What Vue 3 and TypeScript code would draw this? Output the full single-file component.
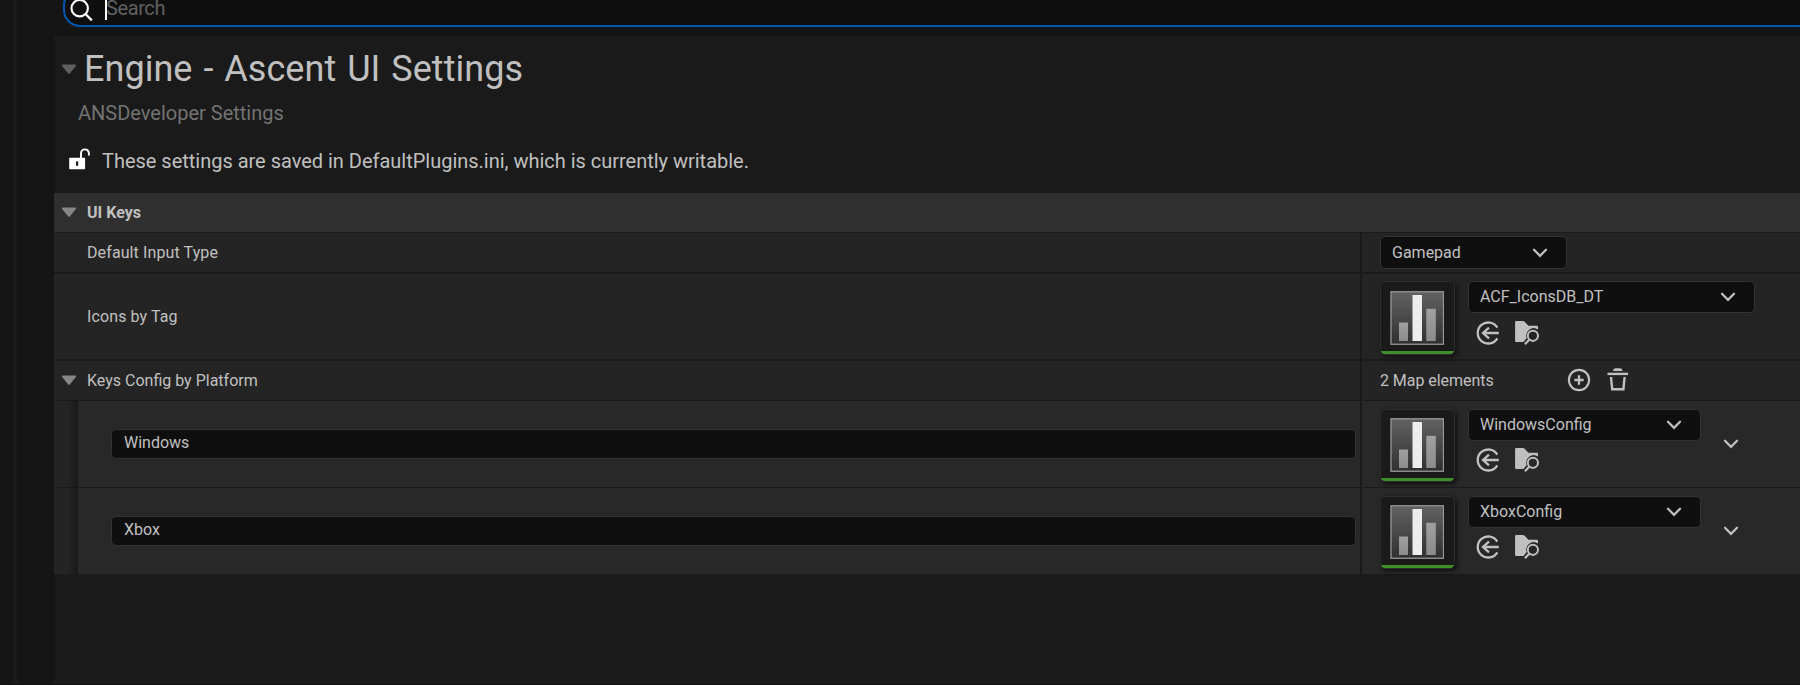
<script setup lang="ts">
interface MapEntry {
  key: string
  asset: string
}

const iconsAsset = 'ACF_IconsDB_DT'
const entries: MapEntry[] = [
  { key: 'Windows', asset: 'WindowsConfig' },
  { key: 'Xbox', asset: 'XboxConfig' },
]
</script>

<template>
  <div class="window">
    <svg class="defs" width="0" height="0" aria-hidden="true">
      <defs>
        <linearGradient id="thumb-bg" x1="0" y1="0" x2="0" y2="1">
          <stop offset="0" stop-color="#626262" />
          <stop offset="1" stop-color="#303030" />
        </linearGradient>
        <linearGradient id="thumb-bar" x1="0" y1="0" x2="0" y2="1">
          <stop offset="0" stop-color="#a0a0a0" />
          <stop offset="1" stop-color="#8c8c8c" />
        </linearGradient>
        <symbol id="caret" viewBox="0 0 16 11">
          <path d="M1.6 .5h12.8q1.3 .2 .5 1.4L9 9.2q-1 1-2 0L1.1 1.9Q.3 .7 1.6 .5z" fill="currentColor" />
        </symbol>
        <symbol id="chevron" viewBox="0 0 16 10">
          <path d="M2 1.800L8 7.800L14 1.800" fill="none" stroke="currentColor" stroke-width="2.300" stroke-linecap="round" stroke-linejoin="miter" />
        </symbol>
        <symbol id="thumb" viewBox="0 0 54 54">
          <rect x="1" y=".75" width="52.5" height="52.5" fill="url(#thumb-bg)" stroke="#979797" stroke-width="1.3" />
          <rect x="9" y="31.500" width="9" height="18.500" fill="url(#thumb-bar)" />
          <rect x="22.500" y="4" width="9.500" height="46" fill="#ededed" />
          <rect x="36.300" y="17.800" width="9.500" height="32.200" fill="url(#thumb-bar)" />
        </symbol>
        <symbol id="use-arrow" viewBox="0 0 24 24">
          <path d="M21.300 6.700A10.500 10.500 0 1 0 21.300 17.300M22.800 12H7M13 6.600L7 12L13 17.400" fill="none" stroke="currentColor" stroke-width="2.300" />
        </symbol>
        <symbol id="browse" viewBox="0 0 25 25">
          <path d="M1.200 0h6.800q.8 0 1.400 .6L13.400 4.800H22q1 0 1 1V8.600A7.400 7.400 0 0 0 11.700 17.100L8.400 21H1.200Q.1 21 .1 19.900V1.100Q.1 0 1.200 0z" fill="currentColor" />
          <circle cx="17.900" cy="14.800" r="5.100" fill="none" stroke="currentColor" stroke-width="2" />
          <path d="M14.400 18.400L9.900 23.300" stroke="currentColor" stroke-width="2.200" />
        </symbol>
      </defs>
    </svg>

    <aside class="gutter"><span class="gutter-line"></span></aside>

    <main class="content">
      <div class="search">
        <svg class="search-icon" viewBox="0 0 24 24">
          <circle cx="9.700" cy="9.200" r="8.200" fill="none" stroke="#fff" stroke-width="2.100" />
          <path d="M15.500 15L21.800 21.400" stroke="#fff" stroke-width="2.300" />
        </svg>
        <span class="cursor"></span>
        <span class="placeholder">Search</span>
      </div>

      <section class="panel">
        <header class="heading">
          <div class="title-row">
            <svg class="caret dim"><use href="#caret" /></svg>
            <h1>Engine - Ascent UI Settings</h1>
          </div>
          <p class="subtitle">ANSDeveloper Settings</p>
          <div class="notice">
            <svg class="lock" viewBox="0 0 22 22">
              <path d="M1 9.800h14.300q.8 0 .8 .8v9.900q0 .8-.8 .8H1q-.8 0-.8-.8V10.600q0-.8 .8-.8z" fill="#fff" />
              <path d="M12 10.300V5.300a3.900 3.900 0 0 1 7.900 0V7.600" fill="none" stroke="#fff" stroke-width="1.900" />
              <rect x="7" y="13.300" width="2.200" height="4.600" rx=".8" fill="#1a1a1a" />
            </svg>
            <span>These settings are saved in DefaultPlugins.ini, which is currently writable.</span>
          </div>
        </header>

        <div class="group">
          <svg class="caret"><use href="#caret" /></svg>
          <h2>UI Keys</h2>
        </div>

        <div class="row short thick">
          <div class="name spaced">Default Input Type</div>
          <div class="value">
            <div class="combo small"><span>Gamepad</span><svg class="chevron"><use href="#chevron" /></svg></div>
          </div>
        </div>

        <div class="row tall thick">
          <div class="name spaced">Icons by Tag</div>
          <div class="value">
            <div class="thumb"><svg><use href="#thumb" /></svg></div>
            <div class="asset">
              <div class="combo wide"><span>{{ iconsAsset }}</span><svg class="chevron"><use href="#chevron" /></svg></div>
              <div class="tools">
                <svg class="use-arrow"><use href="#use-arrow" /></svg>
                <svg class="browse"><use href="#browse" /></svg>
              </div>
            </div>
          </div>
        </div>

        <div class="row short">
          <div class="name"><svg class="caret"><use href="#caret" /></svg>Keys Config by Platform</div>
          <div class="value">
            <span class="count">2 Map elements</span>
            <svg class="plus" viewBox="0 0 24 24">
              <circle cx="12" cy="12" r="10.100" fill="none" stroke="currentColor" stroke-width="2.100" />
              <path d="M12 7.300v9.400M7.300 12h9.400" stroke="currentColor" stroke-width="2.300" />
            </svg>
            <svg class="trash" viewBox="0 0 22 24">
              <path d="M6 2.900Q6.400 .3 8.400 .3h4.800q2 0 2.400 2.600z" fill="currentColor" />
              <path d="M.5 5.900h20.600" stroke="currentColor" stroke-width="2.400" />
              <path d="M4 9L5.200 21.300h11.200L17.600 9" fill="none" stroke="currentColor" stroke-width="2.400" />
            </svg>
          </div>
        </div>

        <div v-for="entry in entries" :key="entry.key" class="row tall child">
          <div class="name">
            <span class="indent"></span>
            <div class="field">{{ entry.key }}</div>
          </div>
          <div class="value">
            <div class="thumb"><svg><use href="#thumb" /></svg></div>
            <div class="asset">
              <div class="combo"><span>{{ entry.asset }}</span><svg class="chevron"><use href="#chevron" /></svg></div>
              <div class="tools">
                <svg class="use-arrow"><use href="#use-arrow" /></svg>
                <svg class="browse"><use href="#browse" /></svg>
              </div>
            </div>
            <svg class="chevron more"><use href="#chevron" /></svg>
          </div>
        </div>
      </section>
    </main>
  </div>
</template>

<style>
html, body { background: #151515; overflow: hidden; }
</style>

<style scoped>
* { box-sizing: border-box; margin: 0; }
svg { display: block; flex: none; }
.window {
  display: flex;
  width: 1800px;
  height: 685px;
  overflow: hidden;
  background: #151515;
  border-bottom: 1px solid #121011;
  color: #c0c0c0;
  font-family: Roboto, "Liberation Sans", sans-serif;
  font-size: 16px;
  line-height: 20px;
}
.defs { position: absolute; }
.gutter { width: 54px; flex: none; padding-left: 13px; }
.gutter-line { display: block; width: 5px; height: 100%; background: #1a1a1a; }
.content { flex: 1; min-width: 0; display: flex; flex-direction: column; }
.search {
  flex: none;
  display: flex;
  height: 39px;
  width: 1780px;
  margin: -12px 0 9px 9px;
  padding: 11px 0 0 5px;
  background: #0f0f0f;
  border: 2px solid #0057b0;
  border-radius: 17px;
}
.search-icon { width: 24px; height: 24px; margin-top: -2px; }
.cursor { width: 2px; height: 25px; margin: -6px 0 0 11px; background: #fff; }
.placeholder { height: 16px; margin: -1px 0 0 -1px; font-size: 20px; line-height: 16px; color: #606060; letter-spacing: -.4px; }
.panel { flex: 1; background: #1a1a1a; }
.heading { height: 157px; padding-top: 9px; }
.title-row { display: flex; align-items: center; height: 48px; }
.caret { width: 16px; height: 11px; margin-left: 7px; color: #868686; }
.caret.dim { color: #606060; }
h1 { margin-left: 7px; font-size: 36px; line-height: 48px; font-weight: 400; letter-spacing: .03px; word-spacing: 2px; white-space: nowrap; }
.subtitle { margin-top: 8px; padding-left: 24px; font-size: 20px; line-height: 24px; color: #737373; }
.notice { display: flex; align-items: center; height: 24px; margin-top: 24px; padding-left: 15px; font-size: 20px; letter-spacing: -.015px; }
.notice span { margin-left: 11px; white-space: nowrap; }
.lock { width: 22px; height: 22px; margin-top: -4px; }
.group { display: flex; align-items: center; height: 40px; background: #2f2f2f; border-bottom: 1px solid #1a1a1a; }
h2 { margin-left: 10px; font-size: 16px; font-weight: 700; line-height: 20px; }
.row { display: flex; background: #242424; border-bottom: 1px solid #1a1a1a; }
.row.thick { border-bottom-width: 2px; }
.short { height: 40px; }
.short.thick { height: 41px; }
.tall { height: 87px; }
.child { background: #282828; }
.child:last-child { border-bottom: 0; height: 86px; }
.name { display: flex; align-items: center; width: 1308px; flex: none; padding-left: 33px; border-right: 2px solid #1a1a1a; }
.name.spaced { letter-spacing: .11px; }
.name .caret { margin: 0 10px 0 -26px; }
.value { display: flex; align-items: center; flex: 1; padding-left: 18px; }
.tall .value { align-items: flex-start; padding-top: 7px; }
.child .value { padding-top: 8px; }
.child .name { padding: 0 4px 0 0; align-items: stretch; }
.indent { width: 24px; background: linear-gradient(90deg, #242424 60%, #191919); }
.field {
  flex: 1;
  align-self: center;
  height: 30px;
  margin-left: 33px;
  padding: 3px 12px;
  background: #0f0f0f;
  border: 1px solid #333;
  border-radius: 5px;
}
.combo {
  display: flex;
  align-items: center;
  justify-content: space-between;
  width: 233px;
  height: 32px;
  padding: 0 18px 0 11px;
  background: #0f0f0f;
  border: 1px solid #333;
  border-radius: 5px;
}
.combo.small { width: 187px; height: 33px; }
.combo.wide { width: 287px; }
.chevron { width: 16px; height: 10px; color: #c0c0c0; }
.thumb {
  width: 75px;
  height: 73px;
  padding: 8px 9px;
  background: linear-gradient(#3f8f28, #3f8f28) left bottom / 100% 3px no-repeat #1a1a1a;
  border: 1px solid #2e2e2e;
  border-radius: 5px;
  box-shadow: 2px 2px 4px #101010;
}
.thick .thumb { height: 74px; padding-top: 9px; }
.thumb svg { width: 54px; height: 54px; }
.asset { height: 74px; margin-left: 13px; }
.tools { display: flex; margin-top: 7px; padding-left: 8px; }
.thick .tools { margin-top: 8px; }
.use-arrow { width: 24px; height: 24px; }
.browse { width: 25px; height: 25px; margin-left: 15px; }
.count { width: 187px; letter-spacing: -.05px; }
.plus { width: 24px; height: 24px; margin-top: -1px; }
.trash { width: 22px; height: 24px; margin: -1px 0 0 16px; }
.more { margin: 30px 0 0 22px; }
</style>
